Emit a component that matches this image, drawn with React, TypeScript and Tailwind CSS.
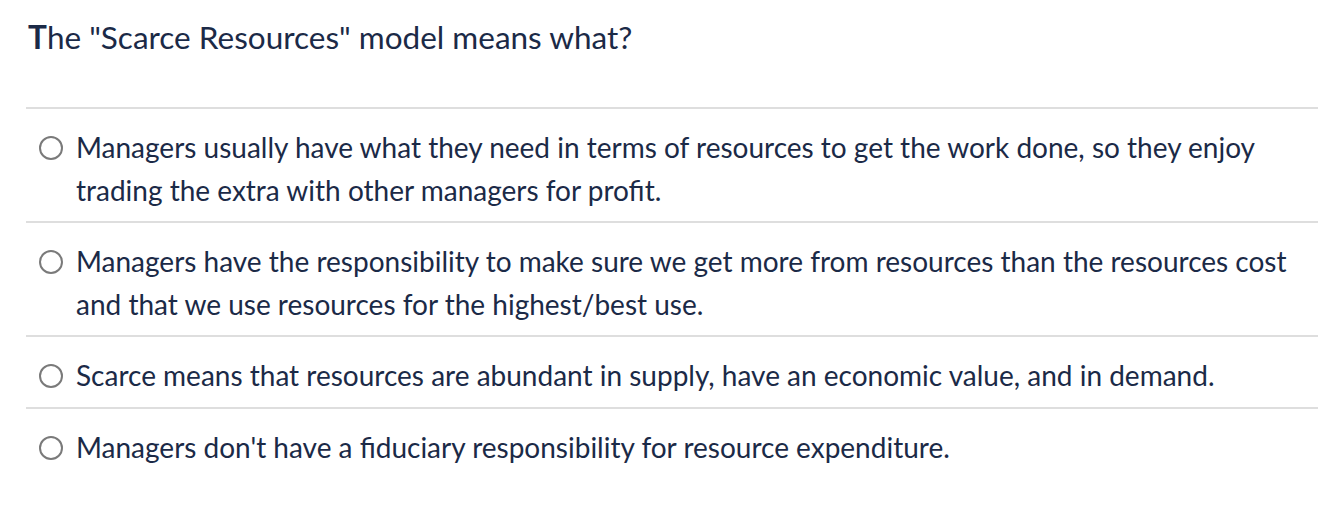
import { useState } from "react";

const answers = [
  "Managers usually have what they need in terms of resources to get the work done, so they enjoy trading the extra with other managers for profit.",
  "Managers have the responsibility to make sure we get more from resources than the resources cost and that we use resources for the highest/best use.",
  "Scarce means that resources are abundant in supply, have an economic value, and in demand.",
  "Managers don't have a fiduciary responsibility for resource expenditure.",
];

export default function App() {
  const [picked, setPicked] = useState<number | null>(null);

  return (
    <main
      className="min-h-screen bg-white text-[#1b2a47]"
      style={{ fontFamily: "Lato, 'Open Sans', sans-serif" }}
    >
      <div className="w-[1318px] pl-[26px]">
        <h2 className="pt-[17px] pl-[2px] text-[31.5px] leading-[40px] font-normal">
          <span className="font-bold">T</span>he "Scarce Resources" model means what?
        </h2>

        <div className="mt-[50px]">
          {answers.map((a, i) => (
            <label
              key={i}
              className="flex items-start border-t-2 border-[#dedede] pt-[17px] pb-[9px] cursor-pointer"
            >
              <span className="flex h-[44px] w-[50px] shrink-0 items-center justify-center">
                <span
                  className={`block h-6 w-6 rounded-full border-2 border-[#7a7a7a] ${
                    picked === i ? "bg-[#7a7a7a]" : "bg-white"
                  }`}
                  onClick={() => setPicked(i)}
                />
              </span>
              <span className="text-[28px] leading-[43px]">{a}</span>
            </label>
          ))}
        </div>
      </div>
    </main>
  );
}
